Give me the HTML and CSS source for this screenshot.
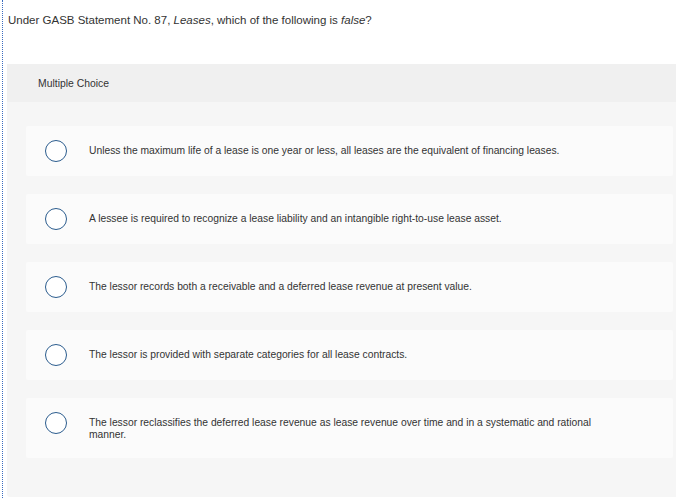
FILE: index.html
```html
<!DOCTYPE html>
<html>
<head>
<meta charset="utf-8">
<link rel="stylesheet" href="styles.css">
</head>
<body>
<div class="frame">
  <p class="question">Under GASB Statement No. 87, <em>Leases</em>, which of the following is <em>false</em>?</p>
  <div class="panel">
    <div class="panel-head">Multiple Choice</div>
    <div class="panel-body">
      <div class="option"><span class="radio"></span><span class="label">Unless the maximum life of a lease is one year or less, all leases are the equivalent of financing leases.</span></div>
      <div class="option"><span class="radio"></span><span class="label">A lessee is required to recognize a lease liability and an intangible right-to-use lease asset.</span></div>
      <div class="option"><span class="radio"></span><span class="label">The lessor records both a receivable and a deferred lease revenue at present value.</span></div>
      <div class="option"><span class="radio"></span><span class="label">The lessor is provided with separate categories for all lease contracts.</span></div>
      <div class="option"><span class="radio"></span><span class="label">The lessor reclassifies the deferred lease revenue as lease revenue over time and in a systematic and rational manner.</span></div>
    </div>
  </div>
</div>
</body>
</html>
```

FILE: styles.css
```css
html, body {
  margin: 0;
  padding: 0;
  background: #ffffff;
  overflow: hidden;
}
body {
  font-family: "Liberation Sans", Arial, sans-serif;
  color: #333333;
}
.frame {
  margin-left: 2px;
  border-left: 1px dotted #3a6cc0;
  padding-left: 4px;
  height: 498px;
  box-sizing: border-box;
}
.question {
  margin: 0;
  padding: 13px 0 0 1px;
  height: 64px;
  box-sizing: border-box;
  font-size: 11.5px;
  line-height: 14px;
  color: #333;
}
.question em {
  font-style: italic;
}
.panel {
  background: #f6f6f6;
  height: 433px;
  border-bottom-left-radius: 3px;
}
.panel-head {
  background: #f0f0f0;
  height: 38px;
  display: flex;
  align-items: center;
  padding-left: 31px;
  font-size: 10.4px;
  color: #333;
}
.panel-body {
  padding: 24px 3px 0 19px;
  display: flex;
  flex-direction: column;
  gap: 18px;
}
.option {
  background: #fbfbfb;
  border-radius: 2px;
  display: flex;
  align-items: flex-start;
  padding: 14px 10px 14px 19px;
  min-height: 50px;
  box-sizing: border-box;
}
.radio {
  flex: none;
  width: 22px;
  height: 22px;
  box-sizing: border-box;
  border: 1.5px solid #2b5c8e;
  border-radius: 50%;
  background: #ffffff;
}
.label {
  margin-left: 22px;
  padding-top: 5px;
  padding-bottom: 3px;
  font-size: 10.3px;
  line-height: 12px;
  max-width: 510px;
  color: #333;
}
```
